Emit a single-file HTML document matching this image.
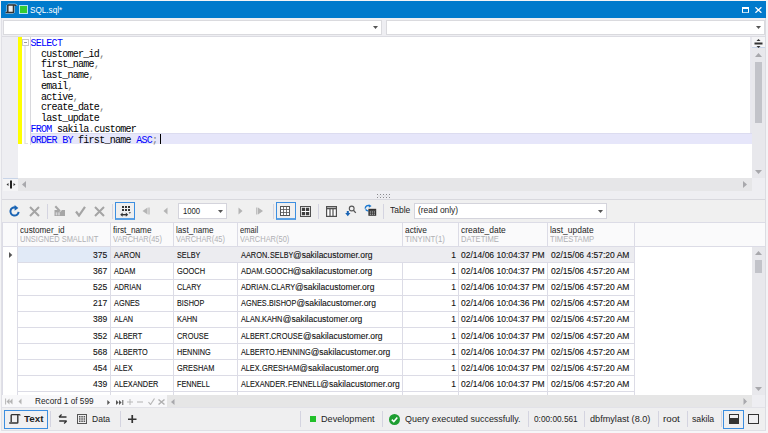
<!DOCTYPE html><html><head><meta charset="utf-8"><style>
*{margin:0;padding:0;box-sizing:border-box}
html,body{width:768px;height:433px;overflow:hidden;background:#eeeef2;font-family:"Liberation Sans",sans-serif;color:#1e1e1e}
.a{position:absolute}
.t{white-space:pre;line-height:1}
.code{font-family:"Liberation Mono",monospace;font-size:10px;letter-spacing:-0.72px;color:#000}
.kw{color:#0000ff}
.pn{color:#808080}
.g{font-size:8.5px;color:#111;-webkit-text-stroke:0.1px #111}
.u{letter-spacing:-0.8px}
.ib{display:inline-block}
.u2{letter-spacing:-0.35px}
</style></head><body>
<div class="a" style="left:0px;top:0px;width:768px;height:433px;background:#f4f4f6"></div>
<div class="a" style="left:1px;top:1px;width:765px;height:432px;background:#eeeef2"></div>
<div class="a" style="left:1px;top:1px;width:765px;height:17px;background:#007acc"></div>
<div class="a t" style="left:30.3px;top:5.88px;font-size:8.6px;transform:scaleX(0.9488);transform-origin:0 0;color:#fff">SQL.sql*</div>
<div class="a" style="left:19px;top:5px;width:9px;height:9px;background:#33cc33;border:1px solid #aee6f0"></div>
<svg class="a" style="left:4px;top:3px;" width="14" height="12" viewBox="0 0 14 12"><g fill="none" stroke="rgba(255,255,255,0.55)" stroke-width="3"><path d="M3.8 1.9H10.8Q12 1.9 12 3M3.8 2v7M9.5 2.5v7.5M1.6 9.6H9.5"/></g><path d="M3.8 2h6v8h-6z" fill="#eeeef0"/><g fill="none" stroke="#333" stroke-width="1.5"><path d="M3.8 1.9H10.8Q12 1.9 12 3M3.8 2v7M9.5 2.5v7.5M1.6 9.6H9.5"/></g></svg>
<div class="a" style="left:742px;top:7px;width:7px;height:6px;border:1px solid #fff;border-top-width:2px;border-bottom-color:rgba(255,255,255,0.7)"></div>
<svg class="a" style="left:755px;top:7px;" width="7" height="6" viewBox="0 0 7 6"><path d="M0.4 0.3L6.4 5.7M6.4 0.3L0.4 5.7" stroke="#fff" stroke-width="1.3"/></svg>
<div class="a" style="left:3px;top:20px;width:379px;height:15px;background:#fff;border:1px solid #dadade"></div>
<svg class="a" style="left:373px;top:26px;" width="5" height="3" viewBox="0 0 5 3"><path d="M0 0h5L2.5 3z" fill="#555"/></svg>
<div class="a" style="left:386px;top:20px;width:379px;height:15px;background:#fff;border:1px solid #dadade"></div>
<svg class="a" style="left:756px;top:26px;" width="5" height="3" viewBox="0 0 5 3"><path d="M0 0h5L2.5 3z" fill="#555"/></svg>
<div class="a" style="left:1px;top:36px;width:765px;height:1px;background:#dcdce2"></div>
<div class="a" style="left:2px;top:37px;width:16px;height:141px;background:#eeeef2"></div>
<div class="a" style="left:18px;top:37px;width:734px;height:141px;background:#fff"></div>
<div class="a" style="left:750px;top:37px;width:2px;height:97px;background:#e8e8ee"></div>
<div class="a" style="left:18px;top:37px;width:4px;height:107px;background:#ffff00"></div>
<div class="a" style="left:22px;top:39px;width:7px;height:7px;border:1px solid #c8c8c8;background:#fff"></div>
<div class="a" style="left:24px;top:42px;width:3px;height:1px;background:#999"></div>
<div class="a" style="left:24px;top:46px;width:2px;height:98px;background:#eaeaea"></div>
<div class="a" style="left:25px;top:143px;width:3px;height:1px;background:#e0e0e0"></div>
<div class="a" style="left:30px;top:37px;width:1px;height:108px;background:#d8d8dc"></div>
<div class="a" style="left:31px;top:133px;width:721px;height:11px;background:#e6e6fa;border-top:1px solid #dcdcf0"></div>
<div class="a" style="left:160px;top:134px;width:1px;height:10px;background:#000"></div>
<div class="a t code" style="left:30.5px;top:38.75px;"><span class="kw">SELECT</span></div>
<div class="a t code" style="left:30.5px;top:49.5px;">  customer_id<span class="pn">,</span></div>
<div class="a t code" style="left:30.5px;top:60.25px;">  first_name<span class="pn">,</span></div>
<div class="a t code" style="left:30.5px;top:71.0px;">  last_name<span class="pn">,</span></div>
<div class="a t code" style="left:30.5px;top:81.75px;">  email<span class="pn">,</span></div>
<div class="a t code" style="left:30.5px;top:92.5px;">  active<span class="pn">,</span></div>
<div class="a t code" style="left:30.5px;top:103.25px;">  create_date<span class="pn">,</span></div>
<div class="a t code" style="left:30.5px;top:114.0px;">  last_update</div>
<div class="a t code" style="left:30.5px;top:124.75px;"><span class="kw">FROM</span> sakila<span class="pn">.</span>customer</div>
<div class="a t code" style="left:30.5px;top:135.5px;"><span class="kw">ORDER BY</span> first_name <span class="kw">ASC</span><span class="pn">;</span></div>
<div class="a" style="left:752px;top:37px;width:13px;height:141px;background:#e8e8ec"></div>
<div class="a" style="left:752px;top:37px;width:13px;height:11px;background:#f5f5f7;border-bottom:1px solid #c8d4e8"></div>
<svg class="a" style="left:754px;top:39px;" width="9" height="9" viewBox="0 0 9 9"><path d="M2.5 2L4.5 0L6.5 2z M0.5 3.5h8v2h-8z M2.5 7L4.5 9L6.5 7z" fill="#333"/></svg>
<svg class="a" style="left:755px;top:53px;" width="7" height="4" viewBox="0 0 7 4"><path d="M0 4h7L3.5 0z" fill="#a8a8ac"/></svg>
<div class="a" style="left:755px;top:62px;width:7px;height:61px;background:#c2c3c9"></div>
<svg class="a" style="left:755px;top:170px;" width="7" height="4" viewBox="0 0 7 4"><path d="M0 0h7L3.5 4z" fill="#a8a8ac"/></svg>
<div class="a" style="left:3px;top:178px;width:15px;height:13px;background:#f4f4f6;border-top:1px solid #c8d4e8"></div>
<svg class="a" style="left:6px;top:180px;" width="10" height="9" viewBox="0 0 10 9"><path d="M5 0.5v8" stroke="#222" stroke-width="2"/><path d="M0.5 4.5L2.5 3v3z M9.5 4.5L7.5 3v3z" fill="#333"/></svg>
<div class="a" style="left:18px;top:178px;width:734px;height:13px;background:#e6e6e8"></div>
<svg class="a" style="left:22px;top:181px;" width="4" height="7" viewBox="0 0 4 7"><path d="M4 0v7L0 3.5z" fill="#a8a8ac"/></svg>
<svg class="a" style="left:743px;top:181px;" width="4" height="7" viewBox="0 0 4 7"><path d="M0 0v7L4 3.5z" fill="#a8a8ac"/></svg>
<svg class="a" style="left:377px;top:194px;" width="14" height="4" viewBox="0 0 14 4"><g fill="#8a8a8e"><rect x="0" y="0" width="1" height="1"/><rect x="0" y="3" width="1" height="1"/><rect x="3" y="0" width="1" height="1"/><rect x="3" y="3" width="1" height="1"/><rect x="6" y="0" width="1" height="1"/><rect x="6" y="3" width="1" height="1"/><rect x="9" y="0" width="1" height="1"/><rect x="9" y="3" width="1" height="1"/><rect x="12" y="0" width="1" height="1"/><rect x="12" y="3" width="1" height="1"/></g><g fill="#c4c4c8"><rect x="1.5" y="1.5" width="1" height="1"/><rect x="4.5" y="1.5" width="1" height="1"/><rect x="7.5" y="1.5" width="1" height="1"/><rect x="10.5" y="1.5" width="1" height="1"/></g></svg>
<div class="a" style="left:1px;top:199px;width:765px;height:1px;background:#d8d8de"></div>
<div class="a" style="left:1px;top:200px;width:765px;height:22px;background:#f0f0f0"></div>
<svg class="a" style="left:9px;top:205px;" width="12" height="12" viewBox="0 0 12 12"><path d="M9.6 6.8A4.1 4.1 0 1 1 6.8 2.6" fill="none" stroke="#1a64b4" stroke-width="2"/><path d="M5.6 0L9.4 3L5.6 5.8z" fill="#1a64b4"/></svg>
<svg class="a" style="left:29px;top:206px;" width="11" height="11" viewBox="0 0 11 11"><path d="M1 1L10 10M10 1L1 10" stroke="#a4a4a4" stroke-width="2"/></svg>
<div class="a" style="left:47px;top:204px;width:1px;height:15px;background:#d4d4e0"></div>
<svg class="a" style="left:54px;top:205px;" width="12" height="12" viewBox="0 0 12 12"><path d="M0.5 5h3.2l2.3 2 2-2h3v6h-10.5z" fill="#a6a6a6"/><path d="M1.3 1.2L6 6.2" stroke="#a6a6a6" stroke-width="2.1"/><path d="M1.7 7.6h1.6v1.2h-1.6z M4.2 7.6h1.6v1.2h-1.6z M1.7 9.3h1.6v1h-1.6z M4.2 9.3h1.6v1h-1.6z" fill="#e4e4e6"/></svg>
<svg class="a" style="left:75px;top:206px;" width="11" height="11" viewBox="0 0 11 11"><path d="M1 5.5L4 9.5L10 0.8" fill="none" stroke="#a4a4a4" stroke-width="2.2"/></svg>
<svg class="a" style="left:94px;top:206px;" width="11" height="11" viewBox="0 0 11 11"><path d="M1 1L10 10M10 1L1 10" stroke="#a4a4a4" stroke-width="2"/></svg>
<div class="a" style="left:112px;top:204px;width:1px;height:15px;background:#d4d4e0"></div>
<div class="a" style="left:115px;top:202px;width:20px;height:18px;background:#efefef;border:1px solid #3c8ee0;border-bottom:2px solid #5aa0e4"></div>
<svg class="a" style="left:119px;top:205px;" width="13" height="13" viewBox="0 0 13 13"><path d="M3 1h2v2h-2z M6 1h2v2h-2z M9 1h2v2h-2z M3 4h2v2h-2z M6 4h2v2h-2z M9 4h2v2h-2z" fill="#333"/><path d="M3 9.7h4" stroke="#333" stroke-width="1.4"/><path d="M1.2 9.7L3.6 7.6v4.2z M9.2 9.7L6.8 7.6v4.2z" fill="#333"/><path d="M9.6 7.2h2.4l-1.2 1.6z" fill="#333"/></svg>
<svg class="a" style="left:142px;top:207px;" width="8" height="8" viewBox="0 0 8 8"><path d="M5.5 0.5v7L0.5 4z" fill="#b4b4b4"/><path d="M7 0.5v7" stroke="#b4b4b4" stroke-width="1.2"/></svg>
<svg class="a" style="left:163px;top:207px;" width="5" height="8" viewBox="0 0 5 8"><path d="M4.5 0.5v7L0.5 4z" fill="#b4b4b4"/></svg>
<div class="a" style="left:178px;top:203px;width:49px;height:16px;background:#fff;border:1px solid #d4d4dc"></div>
<div class="a t" style="left:182.7px;top:206.54px;font-size:8.9px;transform:scaleX(0.8687);transform-origin:0 0;color:#1e1e1e">1000</div>
<svg class="a" style="left:217.5px;top:210px;" width="5" height="3" viewBox="0 0 5 3"><path d="M0 0h5L2.5 3z" fill="#555"/></svg>
<svg class="a" style="left:238px;top:207px;" width="5" height="8" viewBox="0 0 5 8"><path d="M0.5 0.5v7L4.5 4z" fill="#b4b4b4"/></svg>
<svg class="a" style="left:256px;top:207px;" width="9" height="8" viewBox="0 0 9 8"><path d="M2 0.5v7L7 4z" fill="#b4b4b4"/><path d="M0.8 0.5v7" stroke="#b4b4b4" stroke-width="1.2"/></svg>
<div class="a" style="left:273px;top:204px;width:1px;height:15px;background:#d4d4e0"></div>
<div class="a" style="left:276px;top:202px;width:20px;height:18px;background:#efefef;border:1px solid #3c8ee0;border-bottom:2px solid #5aa0e4"></div>
<svg class="a" style="left:280px;top:206px;" width="10" height="10" viewBox="0 0 10 10"><rect x="0.5" y="0.5" width="9" height="9" fill="#fff" stroke="#555" stroke-width="1"/><path d="M3.5 0.5v9M6.5 0.5v9M0.5 3.5h9M0.5 6.5h9" stroke="#555" stroke-width="0.8"/></svg>
<svg class="a" style="left:300px;top:206px;" width="11" height="11" viewBox="0 0 11 11"><rect x="0.5" y="0.5" width="10" height="10" fill="#fff" stroke="#505050" stroke-width="1.1"/><path d="M1.8 1.8h3.3v3.3h-3.3z M5.9 1.8h3.3v3.3h-3.3z M1.8 5.9h3.3v3.3h-3.3z M5.9 5.9h3.3v3.3h-3.3z" fill="#404040"/></svg>
<div class="a" style="left:318px;top:204px;width:1px;height:15px;background:#d4d4e0"></div>
<svg class="a" style="left:326px;top:206px;" width="11" height="11" viewBox="0 0 11 11"><rect x="0.6" y="0.6" width="9.8" height="9.8" fill="#fff" stroke="#505050" stroke-width="1.2"/><path d="M0.5 2.5h10" stroke="#505050" stroke-width="1.6"/><path d="M4 3v7M7 3v7" stroke="#505050" stroke-width="1.2"/></svg>
<svg class="a" style="left:344px;top:204px;" width="13" height="13" viewBox="0 0 13 13"><circle cx="7.7" cy="4.5" r="2.4" fill="none" stroke="#555" stroke-width="1.1"/><path d="M9.4 6.3L11.8 8.9" stroke="#555" stroke-width="1.3"/><path d="M2.8 6.9h2v2.4h-2z M1.2 9.1H6.4L3.8 12.3z" fill="#1a64b4"/></svg>
<svg class="a" style="left:364px;top:204px;" width="13" height="13" viewBox="0 0 13 13"><path d="M1.3 4.6A2.9 2.9 0 0 1 5.6 1.9" fill="none" stroke="#1a78d0" stroke-width="1.5"/><path d="M4.8 0.2L7.6 2L4.9 3.8z" fill="#1a78d0"/><path d="M1.6 5.4A2.9 2.9 0 0 0 4.6 6.8" fill="none" stroke="#1a78d0" stroke-width="1.3"/><rect x="4.4" y="4.8" width="7.8" height="7" fill="#333"/><path d="M5.6 6.5h6.2" stroke="#555" stroke-width="0.6"/><path d="M6.3 7.4v1.2M8.3 7.4v1.2M10.3 7.4v1.2M6.3 9.6v1.2M8.3 9.6v1.2M10.3 9.6v1.2" stroke="#e8e8e8" stroke-width="0.9"/></svg>
<div class="a" style="left:383px;top:204px;width:1px;height:15px;background:#d4d4e0"></div>
<div class="a t" style="left:390.2px;top:206.09px;font-size:9.3px;transform:scaleX(0.9131);transform-origin:0 0;color:#1e1e1e">Table</div>
<div class="a" style="left:414px;top:203px;width:193px;height:16px;background:#fff;border:1px solid #d4d4dc"></div>
<div class="a t" style="left:418.3px;top:206.13px;font-size:9px;transform:scaleX(0.9322);transform-origin:0 0;color:#1e1e1e">(read only)</div>
<svg class="a" style="left:598px;top:210px;" width="5" height="3" viewBox="0 0 5 3"><path d="M0 0h5L2.5 3z" fill="#555"/></svg>
<div class="a" style="left:2px;top:222px;width:764px;height:173px;background:#fff;border-left:1px solid #dcdce6;border-top:1px solid #dcdce6"></div>
<div class="a" style="left:3px;top:223px;width:762px;height:23px;background:#fafafb"></div>
<div class="a" style="left:3px;top:246px;width:762px;height:1px;background:#dcdce6"></div>
<div class="a" style="left:110px;top:223px;width:1px;height:172px;background:#dcdce6"></div>
<div class="a t" style="left:20.4px;top:226.49px;font-size:8.5px;transform:scaleX(0.9612);transform-origin:0 0;color:#1e1e1e">customer_id</div>
<div class="a t" style="left:20.4px;top:236.13px;font-size:8.2px;transform:scaleX(0.9152);transform-origin:0 0;color:#b0b0b4">UNSIGNED SMALLINT</div>
<div class="a" style="left:173px;top:223px;width:1px;height:172px;background:#dcdce6"></div>
<div class="a t" style="left:113.4px;top:226.49px;font-size:8.5px;transform:scaleX(0.9727);transform-origin:0 0;color:#1e1e1e">first_name</div>
<div class="a t" style="left:113.4px;top:236.13px;font-size:8.2px;transform:scaleX(0.9062);transform-origin:0 0;color:#b0b0b4">VARCHAR(45)</div>
<div class="a" style="left:237px;top:223px;width:1px;height:172px;background:#dcdce6"></div>
<div class="a t" style="left:176.4px;top:226.49px;font-size:8.5px;transform:scaleX(0.9562);transform-origin:0 0;color:#1e1e1e">last_name</div>
<div class="a t" style="left:176.4px;top:236.13px;font-size:8.2px;transform:scaleX(0.9062);transform-origin:0 0;color:#b0b0b4">VARCHAR(45)</div>
<div class="a" style="left:402px;top:223px;width:1px;height:172px;background:#dcdce6"></div>
<div class="a t" style="left:240.4px;top:226.49px;font-size:8.5px;transform:scaleX(0.8911);transform-origin:0 0;color:#1e1e1e">email</div>
<div class="a t" style="left:240.4px;top:236.13px;font-size:8.2px;transform:scaleX(0.9136);transform-origin:0 0;color:#b0b0b4">VARCHAR(50)</div>
<div class="a" style="left:458px;top:223px;width:1px;height:172px;background:#dcdce6"></div>
<div class="a t" style="left:405.4px;top:226.49px;font-size:8.5px;transform:scaleX(0.9863);transform-origin:0 0;color:#1e1e1e">active</div>
<div class="a t" style="left:405.4px;top:236.13px;font-size:8.2px;transform:scaleX(0.9521);transform-origin:0 0;color:#b0b0b4">TINYINT(1)</div>
<div class="a" style="left:547px;top:223px;width:1px;height:172px;background:#dcdce6"></div>
<div class="a t" style="left:461.4px;top:226.49px;font-size:8.5px;transform:scaleX(0.9979);transform-origin:0 0;color:#1e1e1e">create_date</div>
<div class="a t" style="left:461.4px;top:236.13px;font-size:8.2px;transform:scaleX(0.9254);transform-origin:0 0;color:#b0b0b4">DATETIME</div>
<div class="a" style="left:634px;top:223px;width:1px;height:172px;background:#dcdce6"></div>
<div class="a t" style="left:550.4px;top:226.49px;font-size:8.5px;transform:scaleX(0.9920);transform-origin:0 0;color:#1e1e1e">last_update</div>
<div class="a t" style="left:550.4px;top:236.13px;font-size:8.2px;transform:scaleX(0.9359);transform-origin:0 0;color:#b0b0b4">TIMESTAMP</div>
<div class="a" style="left:17px;top:223px;width:1px;height:172px;background:#dcdce6"></div>
<div class="a" style="left:18px;top:247px;width:92px;height:15px;background:#e1eaf7"></div>
<div class="a" style="left:111px;top:247px;width:523px;height:15px;background:#ececf0"></div>
<div class="a" style="left:18px;top:262px;width:616px;height:1px;background:#dcdce6"></div>
<div class="a t g" style="left:17px;width:90.3px;top:251.0px;text-align:right">375</div>
<div class="a t g" style="left:113.5px;top:251.0px;"><span class="ib" style="width:26.23px"><span class="ib" style="transform:scaleX(0.8677);transform-origin:0 0">AARON</span></span></div>
<div class="a t g" style="left:177px;top:251.0px;"><span class="ib" style="width:23.41px"><span class="ib" style="transform:scaleX(0.8540);transform-origin:0 0">SELBY</span></span></div>
<div class="a t g" style="left:241px;top:251.0px;"><span class="ib" style="width:26.23px"><span class="ib" style="transform:scaleX(0.8677);transform-origin:0 0">AARON</span></span>.<span class="ib" style="width:23.41px"><span class="ib" style="transform:scaleX(0.8540);transform-origin:0 0">SELBY</span></span>@sakilacustomer.org</div>
<div class="a t g" style="left:402px;width:54px;top:251.0px;text-align:right">1</div>
<div class="a t g" style="left:461px;top:251.0px;">02/14/06 10:04:37 PM</div>
<div class="a t g" style="left:551px;top:251.0px;">02/15/06 4:57:20 AM</div>
<div class="a" style="left:18px;top:279px;width:616px;height:1px;background:#dcdce6"></div>
<div class="a t g" style="left:17px;width:90.3px;top:267.1px;text-align:right">367</div>
<div class="a t g" style="left:113.5px;top:267.1px;"><span class="ib" style="width:21.36px"><span class="ib" style="transform:scaleX(0.8697);transform-origin:0 0">ADAM</span></span></div>
<div class="a t g" style="left:177px;top:267.1px;"><span class="ib" style="width:28.11px"><span class="ib" style="transform:scaleX(0.8754);transform-origin:0 0">GOOCH</span></span></div>
<div class="a t g" style="left:241px;top:267.1px;"><span class="ib" style="width:21.36px"><span class="ib" style="transform:scaleX(0.8697);transform-origin:0 0">ADAM</span></span>.<span class="ib" style="width:28.11px"><span class="ib" style="transform:scaleX(0.8754);transform-origin:0 0">GOOCH</span></span>@sakilacustomer.org</div>
<div class="a t g" style="left:402px;width:54px;top:267.1px;text-align:right">1</div>
<div class="a t g" style="left:461px;top:267.1px;">02/14/06 10:04:37 PM</div>
<div class="a t g" style="left:551px;top:267.1px;">02/15/06 4:57:20 AM</div>
<div class="a" style="left:18px;top:295px;width:616px;height:1px;background:#dcdce6"></div>
<div class="a t g" style="left:17px;width:90.3px;top:283.2px;text-align:right">525</div>
<div class="a t g" style="left:113.5px;top:283.2px;"><span class="ib" style="width:27.32px"><span class="ib" style="transform:scaleX(0.8505);transform-origin:0 0">ADRIAN</span></span></div>
<div class="a t g" style="left:177px;top:283.2px;"><span class="ib" style="width:24.19px"><span class="ib" style="transform:scaleX(0.8581);transform-origin:0 0">CLARY</span></span></div>
<div class="a t g" style="left:241px;top:283.2px;"><span class="ib" style="width:27.32px"><span class="ib" style="transform:scaleX(0.8505);transform-origin:0 0">ADRIAN</span></span>.<span class="ib" style="width:24.19px"><span class="ib" style="transform:scaleX(0.8581);transform-origin:0 0">CLARY</span></span>@sakilacustomer.org</div>
<div class="a t g" style="left:402px;width:54px;top:283.2px;text-align:right">1</div>
<div class="a t g" style="left:461px;top:283.2px;">02/14/06 10:04:37 PM</div>
<div class="a t g" style="left:551px;top:283.2px;">02/15/06 4:57:20 AM</div>
<div class="a" style="left:18px;top:311px;width:616px;height:1px;background:#dcdce6"></div>
<div class="a t g" style="left:17px;width:90.3px;top:299.3px;text-align:right">217</div>
<div class="a t g" style="left:113.5px;top:299.3px;"><span class="ib" style="width:25.76px"><span class="ib" style="transform:scaleX(0.8656);transform-origin:0 0">AGNES</span></span></div>
<div class="a t g" style="left:177px;top:299.3px;"><span class="ib" style="width:27.32px"><span class="ib" style="transform:scaleX(0.8506);transform-origin:0 0">BISHOP</span></span></div>
<div class="a t g" style="left:241px;top:299.3px;"><span class="ib" style="width:25.76px"><span class="ib" style="transform:scaleX(0.8656);transform-origin:0 0">AGNES</span></span>.<span class="ib" style="width:27.32px"><span class="ib" style="transform:scaleX(0.8506);transform-origin:0 0">BISHOP</span></span>@sakilacustomer.org</div>
<div class="a t g" style="left:402px;width:54px;top:299.3px;text-align:right">1</div>
<div class="a t g" style="left:461px;top:299.3px;">02/14/06 10:04:36 PM</div>
<div class="a t g" style="left:551px;top:299.3px;">02/15/06 4:57:20 AM</div>
<div class="a" style="left:18px;top:327px;width:616px;height:1px;background:#dcdce6"></div>
<div class="a t g" style="left:17px;width:90.3px;top:315.4px;text-align:right">389</div>
<div class="a t g" style="left:113.5px;top:315.4px;"><span class="ib" style="width:19.00px"><span class="ib" style="transform:scaleX(0.8559);transform-origin:0 0">ALAN</span></span></div>
<div class="a t g" style="left:177px;top:315.4px;"><span class="ib" style="width:20.42px"><span class="ib" style="transform:scaleX(0.8645);transform-origin:0 0">KAHN</span></span></div>
<div class="a t g" style="left:241px;top:315.4px;"><span class="ib" style="width:19.00px"><span class="ib" style="transform:scaleX(0.8559);transform-origin:0 0">ALAN</span></span>.<span class="ib" style="width:20.42px"><span class="ib" style="transform:scaleX(0.8645);transform-origin:0 0">KAHN</span></span>@sakilacustomer.org</div>
<div class="a t g" style="left:402px;width:54px;top:315.4px;text-align:right">1</div>
<div class="a t g" style="left:461px;top:315.4px;">02/14/06 10:04:37 PM</div>
<div class="a t g" style="left:551px;top:315.4px;">02/15/06 4:57:20 AM</div>
<div class="a" style="left:18px;top:343px;width:616px;height:1px;background:#dcdce6"></div>
<div class="a t g" style="left:17px;width:90.3px;top:331.5px;text-align:right">352</div>
<div class="a t g" style="left:113.5px;top:331.5px;"><span class="ib" style="width:28.11px"><span class="ib" style="transform:scaleX(0.8542);transform-origin:0 0">ALBERT</span></span></div>
<div class="a t g" style="left:177px;top:331.5px;"><span class="ib" style="width:31.57px"><span class="ib" style="transform:scaleX(0.8680);transform-origin:0 0">CROUSE</span></span></div>
<div class="a t g" style="left:241px;top:331.5px;"><span class="ib" style="width:28.11px"><span class="ib" style="transform:scaleX(0.8542);transform-origin:0 0">ALBERT</span></span>.<span class="ib" style="width:31.57px"><span class="ib" style="transform:scaleX(0.8680);transform-origin:0 0">CROUSE</span></span>@sakilacustomer.org</div>
<div class="a t g" style="left:402px;width:54px;top:331.5px;text-align:right">1</div>
<div class="a t g" style="left:461px;top:331.5px;">02/14/06 10:04:37 PM</div>
<div class="a t g" style="left:551px;top:331.5px;">02/15/06 4:57:20 AM</div>
<div class="a" style="left:18px;top:359px;width:616px;height:1px;background:#dcdce6"></div>
<div class="a t g" style="left:17px;width:90.3px;top:347.6px;text-align:right">568</div>
<div class="a t g" style="left:113.5px;top:347.6px;"><span class="ib" style="width:33.77px"><span class="ib" style="transform:scaleX(0.8578);transform-origin:0 0">ALBERTO</span></span></div>
<div class="a t g" style="left:177px;top:347.6px;"><span class="ib" style="width:33.60px"><span class="ib" style="transform:scaleX(0.8571);transform-origin:0 0">HENNING</span></span></div>
<div class="a t g" style="left:241px;top:347.6px;"><span class="ib" style="width:33.77px"><span class="ib" style="transform:scaleX(0.8578);transform-origin:0 0">ALBERTO</span></span>.<span class="ib" style="width:33.60px"><span class="ib" style="transform:scaleX(0.8571);transform-origin:0 0">HENNING</span></span>@sakilacustomer.org</div>
<div class="a t g" style="left:402px;width:54px;top:347.6px;text-align:right">1</div>
<div class="a t g" style="left:461px;top:347.6px;">02/14/06 10:04:37 PM</div>
<div class="a t g" style="left:551px;top:347.6px;">02/15/06 4:57:20 AM</div>
<div class="a" style="left:18px;top:375px;width:616px;height:1px;background:#dcdce6"></div>
<div class="a t g" style="left:17px;width:90.3px;top:363.7px;text-align:right">454</div>
<div class="a t g" style="left:113.5px;top:363.7px;"><span class="ib" style="width:18.54px"><span class="ib" style="transform:scaleX(0.8528);transform-origin:0 0">ALEX</span></span></div>
<div class="a t g" style="left:177px;top:363.7px;"><span class="ib" style="width:37.38px"><span class="ib" style="transform:scaleX(0.8697);transform-origin:0 0">GRESHAM</span></span></div>
<div class="a t g" style="left:241px;top:363.7px;"><span class="ib" style="width:18.54px"><span class="ib" style="transform:scaleX(0.8528);transform-origin:0 0">ALEX</span></span>.<span class="ib" style="width:37.38px"><span class="ib" style="transform:scaleX(0.8697);transform-origin:0 0">GRESHAM</span></span>@sakilacustomer.org</div>
<div class="a t g" style="left:402px;width:54px;top:363.7px;text-align:right">1</div>
<div class="a t g" style="left:461px;top:363.7px;">02/14/06 10:04:37 PM</div>
<div class="a t g" style="left:551px;top:363.7px;">02/15/06 4:57:20 AM</div>
<div class="a" style="left:18px;top:391px;width:616px;height:1px;background:#dcdce6"></div>
<div class="a t g" style="left:17px;width:90.3px;top:379.8px;text-align:right">439</div>
<div class="a t g" style="left:113.5px;top:379.8px;"><span class="ib" style="width:44.29px"><span class="ib" style="transform:scaleX(0.8602);transform-origin:0 0">ALEXANDER</span></span></div>
<div class="a t g" style="left:177px;top:379.8px;"><span class="ib" style="width:32.66px"><span class="ib" style="transform:scaleX(0.8536);transform-origin:0 0">FENNELL</span></span></div>
<div class="a t g" style="left:241px;top:379.8px;"><span class="ib" style="width:44.29px"><span class="ib" style="transform:scaleX(0.8602);transform-origin:0 0">ALEXANDER</span></span>.<span class="ib" style="width:32.66px"><span class="ib" style="transform:scaleX(0.8536);transform-origin:0 0">FENNELL</span></span>@sakilacustomer.org</div>
<div class="a t g" style="left:402px;width:54px;top:379.8px;text-align:right">1</div>
<div class="a t g" style="left:461px;top:379.8px;">02/14/06 10:04:37 PM</div>
<div class="a t g" style="left:551px;top:379.8px;">02/15/06 4:57:20 AM</div>
<svg class="a" style="left:9px;top:252px;" width="4" height="6" viewBox="0 0 4 6"><path d="M0 0v6L3.3 3z" fill="#555"/></svg>
<div class="a" style="left:752px;top:247px;width:13px;height:148px;background:#e8e8ec"></div>
<svg class="a" style="left:755px;top:251px;" width="7" height="4" viewBox="0 0 7 4"><path d="M0 4h7L3.5 0z" fill="#a8a8ac"/></svg>
<div class="a" style="left:755px;top:260px;width:7px;height:13px;background:#c2c3c9"></div>
<svg class="a" style="left:755px;top:387px;" width="7" height="4" viewBox="0 0 7 4"><path d="M0 0h7L3.5 4z" fill="#a8a8ac"/></svg>
<div class="a" style="left:2px;top:395px;width:165px;height:12px;background:#f8f8fa"></div>
<div class="a" style="left:167px;top:395px;width:585px;height:13px;background:#e6e6e6"></div>
<div class="a" style="left:752px;top:395px;width:13px;height:12px;background:#eeeef2"></div>
<svg class="a" style="left:5px;top:398px;" width="8" height="7" viewBox="0 0 8 7"><path d="M0.6 0.5v6" stroke="#b4b4b4" stroke-width="1"/><path d="M4.5 0.5v6L1.5 3.5z M7.5 0.5v6L4.5 3.5z" fill="#b4b4b4"/></svg>
<svg class="a" style="left:18px;top:398px;" width="4" height="7" viewBox="0 0 4 7"><path d="M3.5 0.5v6L0.5 3.5z" fill="#b4b4b4"/></svg>
<div class="a t" style="left:34.6px;top:397.45px;font-size:8.8px;transform:scaleX(0.9358);transform-origin:0 0;color:#1e1e1e">Record 1 of 599</div>
<svg class="a" style="left:106.5px;top:399.5px;" width="4" height="5" viewBox="0 0 4 5"><path d="M0.3 0v5L3 2.5z" fill="#555"/></svg>
<svg class="a" style="left:115.5px;top:399.5px;" width="8" height="5" viewBox="0 0 8 5"><path d="M0 0v5L2.6 2.5z M3 0v5L5.6 2.5z" fill="#555"/><path d="M6.8 0v5" stroke="#555" stroke-width="1"/></svg>
<svg class="a" style="left:126.5px;top:399px;" width="6" height="6" viewBox="0 0 6 6"><path d="M3 0v6M0 3h6" stroke="#b8b8b8" stroke-width="1"/></svg>
<svg class="a" style="left:137px;top:401px;" width="6" height="2" viewBox="0 0 6 2"><path d="M0 1h6" stroke="#b8b8b8" stroke-width="1.1"/></svg>
<svg class="a" style="left:148px;top:397.5px;" width="7" height="7" viewBox="0 0 7 7"><path d="M0.5 4L2.5 6.5L6.5 0.5" fill="none" stroke="#b8b8b8" stroke-width="1.2"/></svg>
<svg class="a" style="left:158px;top:399px;" width="7" height="6" viewBox="0 0 7 6"><path d="M0.5 0.5L6.5 5.5M6.5 0.5L0.5 5.5" stroke="#b0b0b0" stroke-width="1.4"/></svg>
<svg class="a" style="left:170.5px;top:399px;" width="4" height="6" viewBox="0 0 4 6"><path d="M3.5 0v6L0 3z" fill="#a8a8ac"/></svg>
<svg class="a" style="left:743px;top:398px;" width="4" height="7" viewBox="0 0 4 7"><path d="M0.5 0v7L4 3.5z" fill="#a8a8ac"/></svg>
<div class="a" style="left:0px;top:407px;width:768px;height:26px;background:#f6f6f8"></div>
<div class="a" style="left:1px;top:407px;width:765px;height:24px;background:#efeff0;border-top:1px solid #e2e2e8;border-bottom:1px solid #e0e0e6;border-left:1px solid #e4e4ea"></div>
<div class="a" style="left:4px;top:410px;width:44px;height:19px;background:#f0f0f2;border:1px solid #3c8ee0"></div>
<svg class="a" style="left:8px;top:413px;" width="13" height="12" viewBox="0 0 13 12"><path d="M3.2 1.6H11.2Q12 1.6 12 2.6M3.2 1.8v7.2M9.8 2v7.4Q9.8 10 9 10M1.2 10H9" fill="none" stroke="#333" stroke-width="1.4"/></svg>
<div class="a t" style="left:23.8px;top:413.96px;font-size:9.5px;font-weight:bold;transform:scaleX(1.0410);transform-origin:0 0;color:#1e1e1e">Text</div>
<div class="a" style="left:50px;top:411px;width:1px;height:16px;background:#d4d4e0"></div>
<svg class="a" style="left:58px;top:414px;" width="10" height="10" viewBox="0 0 10 10"><path d="M1 3H8.5M1 3L3.6 0.6M1.2 7H8.7M8.7 7L6.1 9.4" fill="none" stroke="#333" stroke-width="1.3"/></svg>
<svg class="a" style="left:77px;top:414px;" width="10" height="10" viewBox="0 0 10 10"><rect x="0.5" y="0.5" width="9" height="9" fill="none" stroke="#555" stroke-width="1"/><path d="M2 2h1.5v1.5H2z M4.3 2h1.5v1.5H4.3z M6.6 2h1.5v1.5H6.6z M2 4.3h1.5v1.5H2z M4.3 4.3h1.5v1.5H4.3z M6.6 4.3h1.5v1.5H6.6z M2 6.6h1.5v1.5H2z M4.3 6.6h1.5v1.5H4.3z M6.6 6.6h1.5v1.5H6.6z" fill="#555"/></svg>
<div class="a t" style="left:92px;top:413.96px;font-size:9.5px;transform:scaleX(0.8970);transform-origin:0 0;color:#1e1e1e">Data</div>
<div class="a" style="left:119.5px;top:411px;width:1px;height:16px;background:#d4d4e0"></div>
<svg class="a" style="left:128px;top:414.5px;" width="8.5" height="8.5" viewBox="0 0 8.5 8.5"><path d="M4.25 0v8.5M0 4.25h8.5" stroke="#333" stroke-width="1.7"/></svg>
<div class="a" style="left:300px;top:411px;width:1px;height:16px;background:#d4d4e0"></div>
<div class="a" style="left:310px;top:416px;width:6px;height:6px;background:#22c02a"></div>
<div class="a t" style="left:321.4px;top:414.06px;font-size:9.5px;transform:scaleX(0.9576);transform-origin:0 0;color:#1e1e1e">Development</div>
<div class="a" style="left:382px;top:411px;width:1px;height:16px;background:#d4d4e0"></div>
<svg class="a" style="left:389px;top:414px;" width="11" height="11" viewBox="0 0 11 11"><circle cx="5.5" cy="5.5" r="5.5" fill="#1e9e32"/><path d="M2.8 5.6L4.8 7.6L8.3 3.6" fill="none" stroke="#fff" stroke-width="1.5"/></svg>
<div class="a t" style="left:405px;top:413.96px;font-size:9.5px;transform:scaleX(0.9402);transform-origin:0 0;color:#1e1e1e">Query executed successfully.</div>
<div class="a" style="left:527.5px;top:411px;width:1px;height:16px;background:#d4d4e0"></div>
<div class="a" style="left:584px;top:411px;width:1px;height:16px;background:#d4d4e0"></div>
<div class="a" style="left:658px;top:411px;width:1px;height:16px;background:#d4d4e0"></div>
<div class="a" style="left:686.5px;top:411px;width:1px;height:16px;background:#d4d4e0"></div>
<div class="a" style="left:720.5px;top:411px;width:1px;height:16px;background:#d4d4e0"></div>
<div class="a t" style="left:533.5px;top:413.96px;font-size:9.5px;transform:scaleX(0.8708);transform-origin:0 0;color:#1e1e1e">0:00:00.561</div>
<div class="a t" style="left:590px;top:413.96px;font-size:9.5px;transform:scaleX(0.9614);transform-origin:0 0;color:#1e1e1e">dbfmylast (8.0)</div>
<div class="a t" style="left:662.8px;top:413.96px;font-size:9.5px;transform:scaleX(1.0263);transform-origin:0 0;color:#1e1e1e">root</div>
<div class="a t" style="left:692px;top:413.96px;font-size:9.5px;transform:scaleX(0.9140);transform-origin:0 0;color:#1e1e1e">sakila</div>
<div class="a" style="left:723px;top:410px;width:21px;height:19px;background:#efeff0;border:1px solid #3c8ee0"></div>
<div class="a" style="left:729px;top:414px;width:10px;height:10px;border:1px solid #333;background:linear-gradient(#f0f0f2 0 40%,#333 40%)"></div>
<div class="a" style="left:748px;top:414px;width:11px;height:10px;border:1px solid #333;background:#f0f0f2"></div>
<div class="a" style="left:1px;top:18px;width:1px;height:412px;background:#e0e0e6"></div>
<div class="a" style="left:765px;top:18px;width:1px;height:412px;background:#dcdce2"></div>
</body></html>
